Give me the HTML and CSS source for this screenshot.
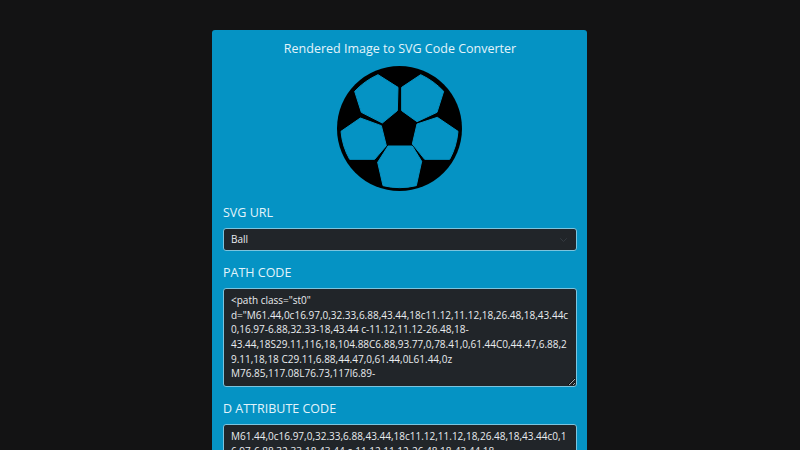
FILE: index.html
```html
<!DOCTYPE html>
<html lang="en">
<head>
    <meta charset="UTF-8">
    <meta name="viewport" content="width=device-width, initial-scale=1.0">
    <title>Rendered Image to SVG Code Converter</title>
    <link rel="stylesheet" href="styles.css">
</head>
<body>
    <main class="card">
        <h1>Rendered Image to SVG Code Converter</h1>

        <div class="preview">
            <svg class="ball" viewBox="52 16 375 375" width="125" height="125" aria-label="Ball">
                <circle cx="239.5" cy="203.5" r="187.5" fill="#000"/>
                <g class="panel">
                    <path d="M175,42 L235,80 L233,150 L188,187 L125,155 L105,92 Q135,60 175,42z"/>
                    <path d="M303,42 L246,80 L246,150 L292,183 L352,155 L372,92 Q342,60 303,42z"/>
                    <path d="M122,172 L185,195 L200,255 L165,296 L90,296 Q68,258 64,212z"/>
                    <path d="M353,170 L415,212 Q411,258 390,296 L315,296 L278,250 L292,190z"/>
                    <path d="M205,256 L278,256 L306,302 L290,375 Q240,387 190,375 L174,305z"/>
                </g>
            </svg>
        </div>

        <div class="field">
            <label for="svgUrl">SVG URL</label>
            <select id="svgUrl">
                <option>Ball</option>
            </select>
        </div>

        <div class="field">
            <label for="pathCode">PATH CODE</label>
            <textarea id="pathCode" class="code-tall" readonly>&lt;path class="st0" d="M61.44,0c16.97,0,32.33,6.88,43.44,18c11.12,11.12,18,26.48,18,43.44c0,16.97-6.88,32.33-18,43.44 c-11.12,11.12-26.48,18-43.44,18S29.11,116,18,104.88C6.88,93.77,0,78.41,0,61.44C0,44.47,6.88,29.11,18,18 C29.11,6.88,44.47,0,61.44,0L61.44,0z M76.85,117.08L76.73,117l6.89-</textarea>
        </div>

        <div class="field">
            <label for="dCode">D ATTRIBUTE CODE</label>
            <textarea id="dCode" class="code-tall" readonly>M61.44,0c16.97,0,32.33,6.88,43.44,18c11.12,11.12,18,26.48,18,43.44c0,16.97-6.88,32.33-18,43.44 c-11.12,11.12-26.48,18-43.44,18</textarea>
        </div>
    </main>
</body>
</html>
```

FILE: styles.css
```css
html {
    overflow: hidden;
}
body {
    margin: 0;
    padding: 30px 1px 0 0;
    background-color: #131314;
    font-family: "Open Sans", sans-serif;
    color: #e3f4fb;
}
.card {
    width: 375px;
    margin: 0 auto;
    padding: 10px 10px 20px 11px;
    box-sizing: border-box;
    background-color: #0593c4;
    border-radius: 3px;
}
h1 {
    margin: 0;
    font-size: 12.5px;
    font-weight: 400;
    line-height: 17px;
    text-align: center;
}
.preview {
    display: flex;
    justify-content: center;
    margin-top: 9px;
    padding-right: 1px;
}
.ball {
    display: block;
}
.panel {
    fill: #0593c4;
    stroke: #0593c4;
    stroke-width: 3;
    stroke-linejoin: round;
}
.field {
    margin-top: 13px;
}
label {
    display: block;
    margin-bottom: 7px;
    font-size: 12.5px;
    line-height: 17px;
}
select, textarea {
    display: block;
    width: 100%;
    box-sizing: border-box;
    margin: 0;
    border: 1px solid #7cc4de;
    border-radius: 3px;
    background-color: #212529;
    color: #e9ecef;
    font-family: "Open Sans", sans-serif;
    font-size: 10px;
}
select {
    height: 23px;
    padding: 0 7px 1px;
    appearance: none;
    background-image: url("data:image/svg+xml,%3csvg xmlns='http://www.w3.org/2000/svg' viewBox='0 0 16 16'%3e%3cpath fill='none' stroke='%23343a40' stroke-linecap='round' stroke-linejoin='round' stroke-width='2' d='m2 5 6 6 6-6'/%3e%3c/svg%3e");
    background-repeat: no-repeat;
    background-position: right 8px center;
    background-size: 9px 8px;
}
textarea {
    padding: 4px 6px 5px 7px;
    line-height: 14.65px;
    resize: vertical;
    overflow: hidden;
    outline: none;
}
.code-tall {
    height: 99px;
}
```
